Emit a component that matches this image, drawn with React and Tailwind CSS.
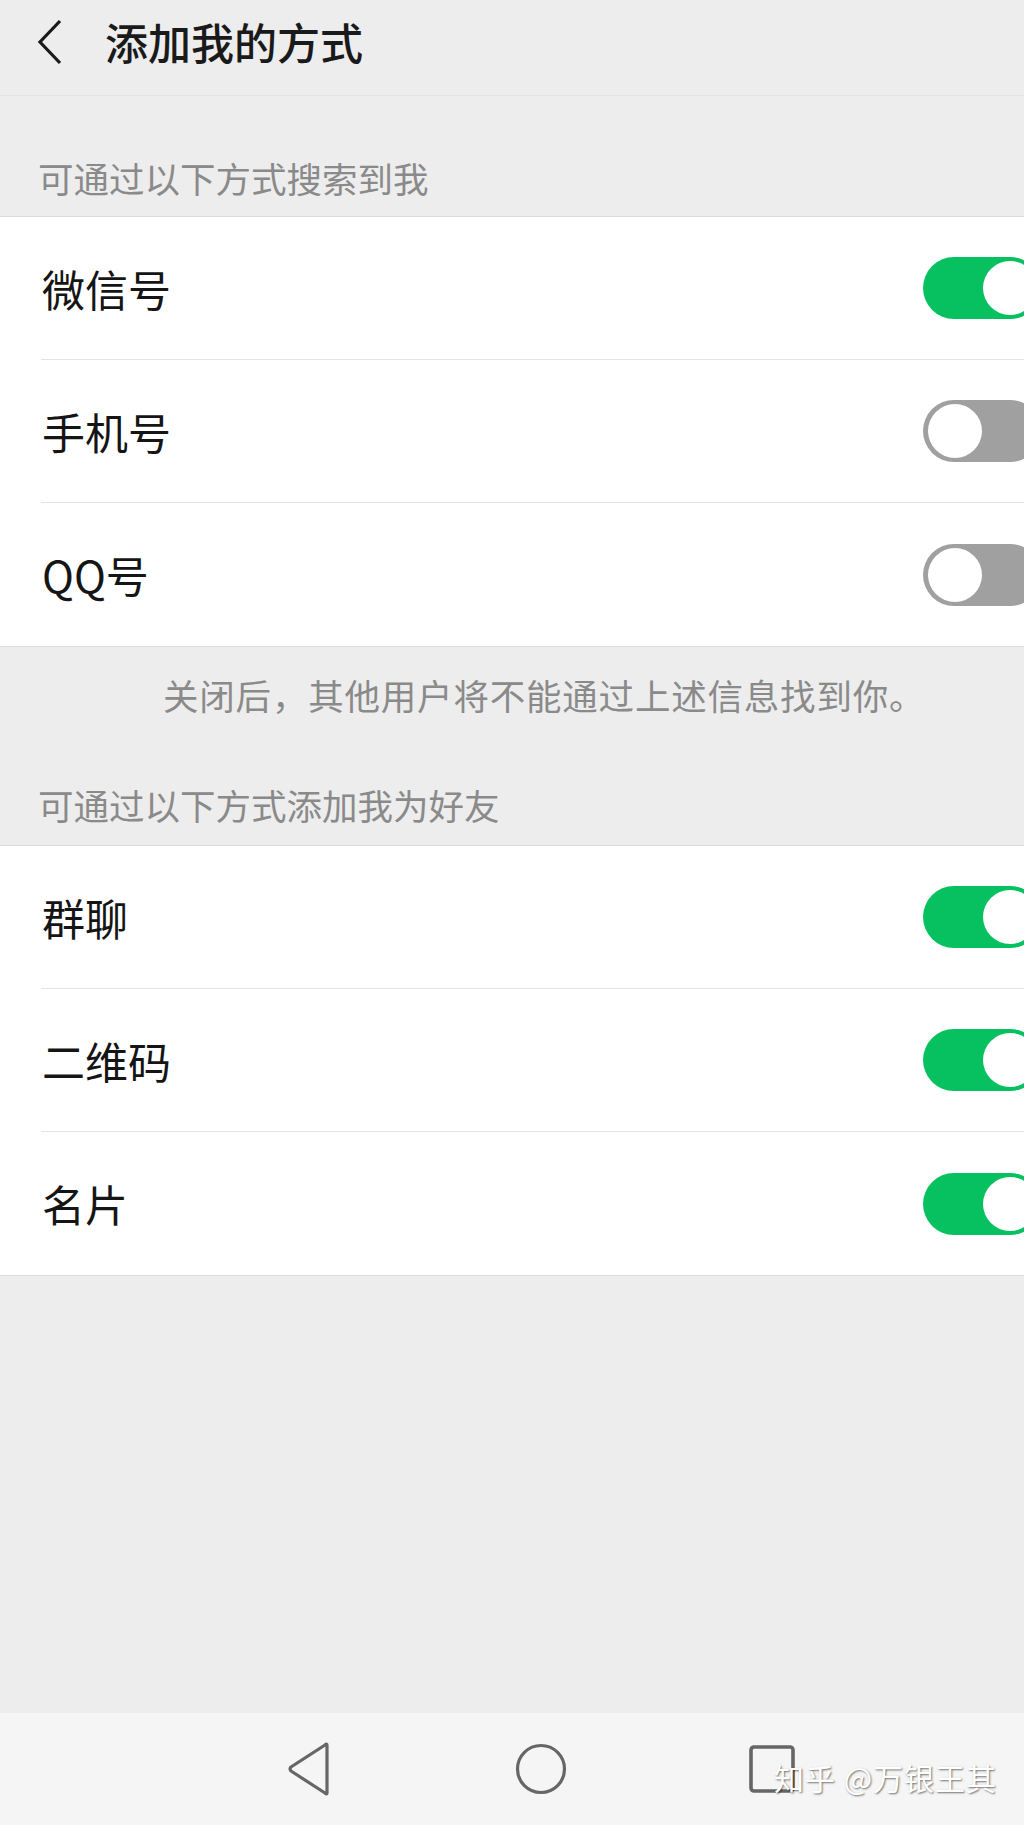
import React, { useState } from "react";

const searchItems = [
  { key: "wechat", label: "微信号", on: true },
  { key: "phone", label: "手机号", on: false },
  { key: "qq", label: "QQ号", on: false },
];

const addItems = [
  { key: "group", label: "群聊", on: true },
  { key: "qrcode", label: "二维码", on: true },
  { key: "card", label: "名片", on: true },
];

const Toggle = ({ on, onClick }) => (
  <button
    onClick={onClick}
    className={`relative ml-auto -mr-[17px] h-[62px] w-[118px] shrink-0 rounded-full ${
      on ? "bg-[#07c160]" : "bg-[#a0a0a0]"
    }`}
  >
    <span
      className={`absolute top-[4px] h-[54px] w-[54px] rounded-full bg-white ${
        on ? "left-[60px]" : "left-[5px]"
      }`}
    />
  </button>
);

const Section = ({ items, state, toggle }) => (
  <div className="bg-white border-y border-[#dcdcdc] overflow-hidden">
    {items.map((item, i) => (
      <div key={item.key} className="pl-[41px]">
        <div
          className={`flex h-[143px] items-center ${
            i < items.length - 1 ? "border-b border-[#e3e3e3]" : ""
          }`}
        >
          <span className="pl-px text-[43px] leading-none text-[#151515]">
            {item.label}
          </span>
          <Toggle on={state[item.key]} onClick={() => toggle(item.key)} />
        </div>
      </div>
    ))}
  </div>
);

const App = () => {
  const [state, setState] = useState(() => {
    const init = {};
    [...searchItems, ...addItems].forEach((it) => (init[it.key] = it.on));
    return init;
  });

  const toggle = (key) => setState((s) => ({ ...s, [key]: !s[key] }));

  return (
    <div className="flex h-[1825px] w-[1024px] flex-col overflow-hidden bg-[#ededed] font-['Noto_Sans_CJK_SC','Noto_Sans',sans-serif]">
      {/* header */}
      <div className="flex h-[96px] shrink-0 items-center border-b border-[#e2e2e2] pb-[12px]">
        <svg width="26" height="46" viewBox="0 0 26 46" className="ml-[37px]">
          <polyline
            points="23,2 3,23 23,44"
            fill="none"
            stroke="#1a1a1a"
            strokeWidth="3.2"
          />
        </svg>
        <h1 className="ml-[42px] text-[43px] font-medium leading-none text-[#1a1a1a]">
          添加我的方式
        </h1>
      </div>

      <div className="flex h-[120px] shrink-0 items-end px-[38px] pb-[21px]">
        <span className="text-[35.5px] leading-none text-[#8a8a8a]">
          可通过以下方式搜索到我
        </span>
      </div>

      <Section items={searchItems} state={state} toggle={toggle} />

      <div className="flex h-[88px] shrink-0 items-center pl-[163px] pt-[8px]">
        <span className="text-[35.5px] leading-none tracking-[0.8px] text-[#8a8a8a]">
          关闭后，其他用户将不能通过上述信息找到你。
        </span>
      </div>

      <div className="flex h-[110px] shrink-0 items-end px-[38px] pb-[23px]">
        <span className="text-[35.5px] leading-none text-[#8a8a8a]">
          可通过以下方式添加我为好友
        </span>
      </div>

      <Section items={addItems} state={state} toggle={toggle} />

      <div className="flex-1" />

      {/* nav bar */}
      <div className="relative flex h-[112px] shrink-0 items-center bg-[#f5f5f5]">
        <div className="flex w-full items-center pl-[287px]">
          <svg width="44" height="54" viewBox="0 0 44 54">
            <path
              d="M40 3 L40 51 Q40 53 38 51 L4 29 Q2 27 4 25 L38 3 Q40 1 40 3 Z"
              fill="none"
              stroke="#666"
              strokeWidth="3.2"
              strokeLinejoin="round"
            />
          </svg>
          <svg width="52" height="52" viewBox="0 0 52 52" className="ml-[184px]">
            <circle cx="26" cy="26" r="23.5" fill="none" stroke="#666" strokeWidth="3.2" />
          </svg>
          <svg width="46" height="48" viewBox="0 0 46 48" className="ml-[182px]">
            <rect
              x="2"
              y="2"
              width="42"
              height="44"
              rx="3"
              fill="none"
              stroke="#666"
              strokeWidth="3.6"
            />
          </svg>
        </div>
        <span className="absolute left-[774px] top-[49px] text-[30px] leading-none tracking-[1px] text-white [text-shadow:1px_1px_2px_rgba(0,0,0,0.55)]">
          知乎 @万银王其
        </span>
      </div>
    </div>
  );
};

export default App;
